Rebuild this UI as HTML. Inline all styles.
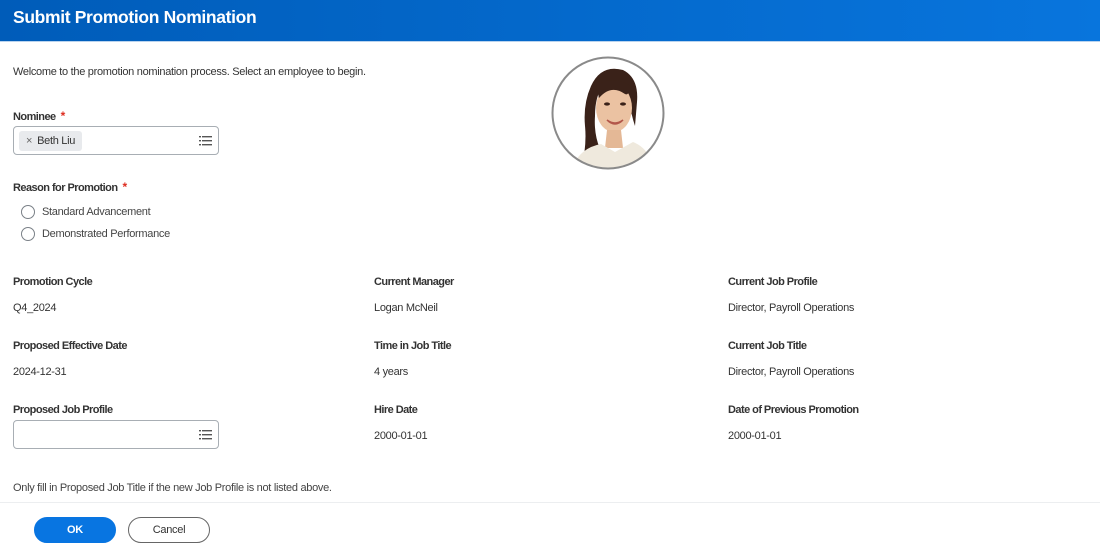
<!DOCTYPE html>
<html><head><meta charset="utf-8"><style>
*{margin:0;padding:0;box-sizing:border-box}
body{width:1100px;height:556px;background:#fff;font-family:"Liberation Sans",Arial,sans-serif;color:#333;position:relative;overflow:hidden;font-size:11px;letter-spacing:-0.3px}
.hdr{position:absolute;left:0;top:0;width:1100px;height:42px;background:linear-gradient(90deg,#005cb9,#0875dd);border-bottom:1px solid #b9d3ee}
.hdr h1{position:absolute;left:13px;top:7px;color:#fff;font-size:17.5px;font-weight:bold;letter-spacing:-0.35px}
.a{position:absolute;white-space:nowrap}
.lbl{font-weight:bold;color:#333;font-size:11px;letter-spacing:-0.55px}
.req{color:#de2e21;margin-left:5px;font-size:12px}
.box{position:absolute;border:1px solid #a8aeb4;border-radius:4px;background:#fff}
.pill{position:absolute;left:5px;top:4px;height:20px;background:#e8eaed;border-radius:3px;padding:0 7px 0 7px;line-height:20px;font-size:11px;color:#333}
.radio{position:absolute;width:14px;height:14px;border:1px solid #7a8087;border-radius:50%}
.btn{position:absolute;height:26px;border-radius:13px;text-align:center;line-height:24px;font-size:11px;font-weight:bold}
</style></head><body>
<div class="hdr"><h1>Submit Promotion Nomination</h1></div>
<div class="a" style="left:13px;top:66px">Welcome to the promotion nomination process. Select an employee to begin.</div>
<div class="a lbl" style="left:13px;top:109px">Nominee<span class="req">*</span></div>
<div class="box" style="left:13px;top:126px;width:206px;height:29px">
<div class="pill"><span style="color:#666;margin-right:5px">×</span>Beth Liu</div>
<svg style="position:absolute;right:6px;top:8px" width="13" height="11" viewBox="0 0 13 11"><g fill="#555"><rect x="0" y="1" width="2" height="1.4"/><rect x="3" y="1" width="10" height="1.4"/><rect x="0" y="5" width="2" height="1.4"/><rect x="3" y="5" width="10" height="1.4"/><rect x="0" y="9" width="2" height="1.4"/><rect x="3" y="9" width="10" height="1.4"/></g></svg>
</div>
<div class="a lbl" style="left:13px;top:180px">Reason for Promotion<span class="req">*</span></div>
<div class="radio" style="left:21px;top:205px"></div><div class="a" style="left:42px;top:206px;color:#444">Standard Advancement</div>
<div class="radio" style="left:21px;top:227px"></div><div class="a" style="left:42px;top:228px;color:#444">Demonstrated Performance</div>

<svg class="a" style="left:551px;top:56px" width="114" height="114" viewBox="0 0 114 114">
<defs><clipPath id="c"><circle cx="57" cy="57" r="55"/></clipPath></defs>
<circle cx="57" cy="57" r="55" fill="#fff"/>
<g clip-path="url(#c)">
<path d="M40 30 Q50 8 72 14 Q88 22 86 46 L84 70 Q80 58 78 44 Q70 28 52 30 Q44 40 44 60 Q42 90 60 110 L30 114 Q36 90 34 70 Q32 48 40 30Z" fill="#3a2219"/>
<ellipse cx="63" cy="52" rx="18" ry="24" fill="#ebc2a2"/>
<path d="M45 30 Q60 18 80 30 Q78 40 74 38 Q60 28 48 42Z" fill="#3a2219"/>
<path d="M56 74 L70 74 L72 92 L54 92Z" fill="#e4b896"/>
<path d="M20 114 Q28 92 50 88 L64 96 L82 86 Q98 92 104 114Z" fill="#efe9dd"/>
<path d="M56 64 Q64 70 72 64 Q64 72 56 64Z" fill="#fff" stroke="#b3574a" stroke-width="1.5"/>
<ellipse cx="56" cy="48" rx="3" ry="1.6" fill="#3a2219"/><ellipse cx="72" cy="48" rx="3" ry="1.6" fill="#3a2219"/>
</g>
<circle cx="57" cy="57" r="55.5" fill="none" stroke="#8a8a8a" stroke-width="2"/>
</svg>

<div class="a lbl" style="left:13px;top:276px">Promotion Cycle</div>
<div class="a" style="left:13px;top:302px">Q4_2024</div>
<div class="a lbl" style="left:374px;top:276px">Current Manager</div>
<div class="a" style="left:374px;top:302px">Logan McNeil</div>
<div class="a lbl" style="left:728px;top:276px">Current Job Profile</div>
<div class="a" style="left:728px;top:302px">Director, Payroll Operations</div>

<div class="a lbl" style="left:13px;top:340px">Proposed Effective Date</div>
<div class="a" style="left:13px;top:366px">2024-12-31</div>
<div class="a lbl" style="left:374px;top:340px">Time in Job Title</div>
<div class="a" style="left:374px;top:366px">4 years</div>
<div class="a lbl" style="left:728px;top:340px">Current Job Title</div>
<div class="a" style="left:728px;top:366px">Director, Payroll Operations</div>

<div class="a lbl" style="left:13px;top:404px">Proposed Job Profile</div>
<div class="box" style="left:13px;top:420px;width:206px;height:29px">
<svg style="position:absolute;right:6px;top:8px" width="13" height="11" viewBox="0 0 13 11"><g fill="#555"><rect x="0" y="1" width="2" height="1.4"/><rect x="3" y="1" width="10" height="1.4"/><rect x="0" y="5" width="2" height="1.4"/><rect x="3" y="5" width="10" height="1.4"/><rect x="0" y="9" width="2" height="1.4"/><rect x="3" y="9" width="10" height="1.4"/></g></svg>
</div>
<div class="a lbl" style="left:374px;top:404px">Hire Date</div>
<div class="a" style="left:374px;top:430px">2000-01-01</div>
<div class="a lbl" style="left:728px;top:404px">Date of Previous Promotion</div>
<div class="a" style="left:728px;top:430px">2000-01-01</div>

<div class="a" style="left:13px;top:482px;color:#444">Only fill in Proposed Job Title if the new Job Profile is not listed above.</div>
<div class="a" style="left:0;top:502px;width:1100px;height:1px;background:#eceef0"></div>
<div class="btn" style="left:34px;top:517px;width:82px;background:#0875e1;color:#fff;border:1px solid #0875e1">OK</div>
<div class="btn" style="left:128px;top:517px;width:82px;background:#fff;color:#333;border:1px solid #666;font-weight:normal">Cancel</div>
</body></html>
